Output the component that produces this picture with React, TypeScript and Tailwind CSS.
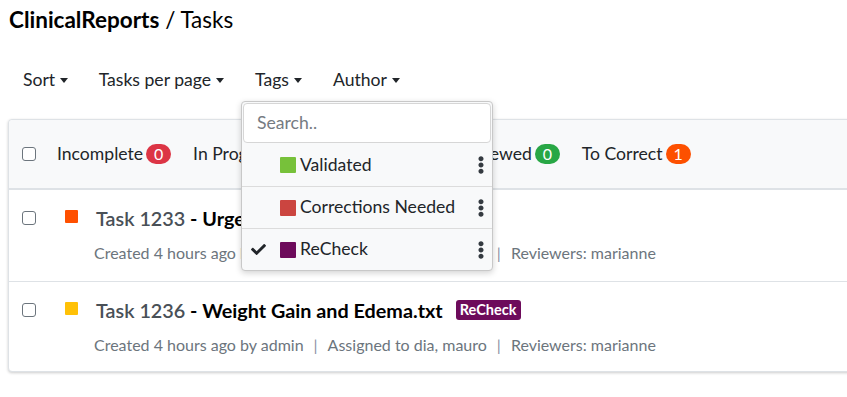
import { FaCheck, FaEllipsisV } from "react-icons/fa";

const filters = [
  { label: "Incomplete", count: 0, color: "bg-[#dc3545]" },
  { label: "In Progress", count: 0, color: "bg-[#0d6efd]" },
  { label: "To Review", count: 0, color: "bg-[#6c757d]" },
  { label: "Reviewed", count: 0, color: "bg-[#28a745]" },
  { label: "To Correct", count: 1, color: "bg-[#fd5000]" },
];

const tags = [
  { name: "Validated", color: "bg-[#77c13a]", checked: false },
  { name: "Corrections Needed", color: "bg-[#cb4540]", checked: false },
  { name: "ReCheck", color: "bg-[#6d0b5b]", checked: true },
];

function Caret() {
  return (
    <span className="inline-block ml-[5px] w-0 h-0 border-l-[4.5px] border-r-[4.5px] border-t-[5px] border-l-transparent border-r-transparent border-t-[#212529] align-[3px]"></span>
  );
}

function Checkbox() {
  return <span className="block w-[14px] h-[14px] rounded-[3px] border border-[#6c757d] bg-white shrink-0"></span>;
}

function TaskRow(props: { id: number; name: string; square: string; badge?: boolean; assigned: string; last?: boolean }) {
  return (
    <div className={"flex pl-[13px] " + (props.last ? "h-[89px]" : "h-[92px] border-b border-[#dee2e6]")}>
      <div className="pt-[21px]">
        <Checkbox />
      </div>
      <div className="ml-[29px] pt-[20px]">
        <span className={"block w-[13px] h-[13px] rounded-[1px] " + props.square}></span>
      </div>
      <div className="ml-[16px] pt-[15px] flex flex-col">
        <div className="flex items-center ml-[2px] text-[19.8px] leading-[26px] whitespace-nowrap">
          <span className="font-semibold text-[#495057]">Task {props.id}</span>
          <span className="font-bold text-black">&nbsp;- {props.name}</span>
          {props.badge && (
            <span className="ml-[13px] px-[4px] h-[20px] leading-[20px] rounded-[3px] bg-[#6d0b5b] text-white text-[14.5px] font-bold">ReCheck</span>
          )}
        </div>
        <div className="mt-[12px] text-[16px] leading-[20px] text-[#6c757d] flex whitespace-nowrap">
          <span>Created 4 hours ago by admin</span>
          <span className="mx-[10px] text-[#8a8fa3]">|</span>
          <span>Assigned to {props.assigned}</span>
          <span className="mx-[10px] text-[#8a8fa3]">|</span>
          <span>Reviewers: marianne</span>
        </div>
      </div>
    </div>
  );
}

export default function App() {
  return (
    <div className="relative w-[847px] h-[397px] overflow-hidden bg-white text-[#212529] font-['Lato','Liberation_Sans',sans-serif]">
      <div className="pl-[9px] pt-[6px] text-[22.5px] leading-[28px] text-black">
        <span className="font-bold">ClinicalReports</span> / Tasks
      </div>

      <div className="flex mt-[33px] pl-[8px] text-[17.6px] leading-[26px]">
        <div className="px-[15px]">Sort<Caret /></div>
        <div className="px-[15.5px]">Tasks per page<Caret /></div>
        <div className="px-[15.5px]">Tags<Caret /></div>
        <div className="px-[15.5px]">Author<Caret /></div>
      </div>

      <div className="mt-[26px] ml-[8px] w-[900px] border border-[#dee2e6] rounded-[4px] shadow-[0_1px_3px_rgba(0,0,0,0.2)] bg-white">
        <div className="h-[70px] flex items-center pl-[13px] bg-[#f8f9fa] border-b-2 border-[#dee2e6] rounded-t-[4px]">
          <Checkbox />
          <div className="flex ml-[21px] gap-[22px] text-[17.6px]">
            {filters.map((f) => (
              <div key={f.label} className="flex items-center">
                <span>{f.label}</span>
                <span className={"ml-[3px] w-[25px] h-[20px] rounded-full text-white text-[16px] leading-[20px] text-center " + f.color}>{f.count}</span>
              </div>
            ))}
          </div>
        </div>
        <TaskRow id={1233} name="Urgent Review of Lab Results.txt" square="bg-[#ff5000]" assigned="dia, mauro" />
        <TaskRow id={1236} name="Weight Gain and Edema.txt" square="bg-[#ffc107]" badge assigned="dia, mauro" last />
      </div>

      <div className="absolute left-[241px] top-[101px] w-[252px] border border-[#c8c8c8] rounded-[4px] bg-[#f8f9fa] shadow-[0_2px_6px_rgba(0,0,0,0.18)]">
        <div className="m-[1px] h-[40px] rounded-[4px] border border-[#d6d6d6] bg-white flex items-center pl-[13px] text-[17.6px] text-[#757b82]">
          Search..
        </div>
        {tags.map((t, i) => (
          <div key={t.name} className={"h-[42px] flex items-center text-[17.6px] " + (i > 0 ? "border-t border-[#dcdcdc]" : "")}>
            <span className="w-[38px] flex pl-[9px]">
              {t.checked && <FaCheck className="w-[15px] h-[15px] text-[#212529]" />}
            </span>
            <span className={"w-[16px] h-[16px] rounded-[1px] " + t.color}></span>
            <span className="ml-[4px] text-[#212529]">{t.name}</span>
            <span className="ml-auto mr-[4px] flex">
              <FaEllipsisV className="w-[14px] h-[18px] text-[#343a40]" />
            </span>
          </div>
        ))}
      </div>
    </div>
  );
}
